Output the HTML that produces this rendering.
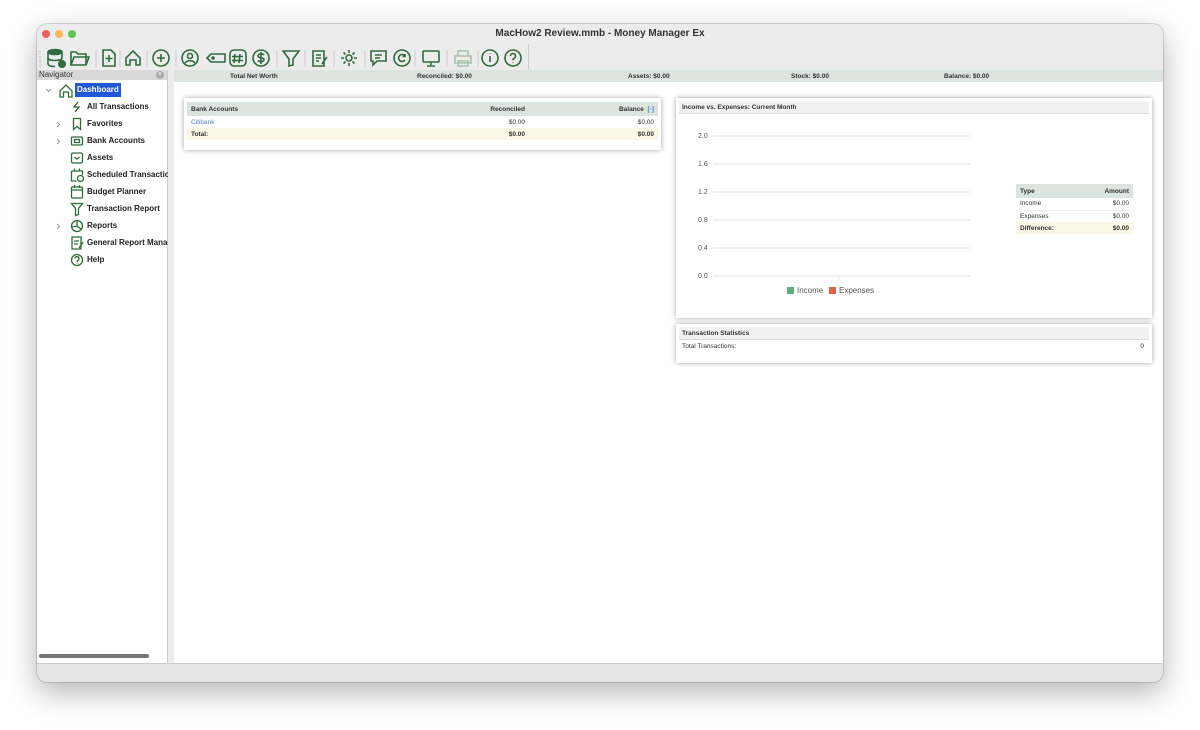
<!DOCTYPE html>
<html><head><style>
*{margin:0;padding:0;box-sizing:border-box}
body{width:1200px;height:730px;background:#fff;font-family:"Liberation Sans",sans-serif;position:relative;overflow:hidden}
.win{position:absolute;left:37px;top:24px;width:1126px;height:658px;background:#ececec;border-radius:10px;box-shadow:0 10px 30px rgba(0,0,0,.3),0 0 0 1px rgba(0,0,0,.15);overflow:hidden}
.title{position:absolute;left:0;top:0;width:100%;height:20px;text-align:center;font-size:10px;font-weight:bold;color:#333;line-height:20px}
.dot{position:absolute;top:6px;width:8px;height:8px;border-radius:50%}
.tb{position:absolute;left:0;top:20px;height:27px;width:492px;border-right:1px solid #ccc}
.tb svg{position:absolute;top:3px}
.nav{position:absolute;left:0;top:46px;width:131px;height:593px;background:#fff;border-right:1px solid #ccc}
.navh{height:10px;background:#d8d8d8;font-size:8px;color:#333;padding-left:2px;line-height:10px;position:relative}
.item{position:absolute;font-size:8px;font-weight:bold;color:#222;line-height:10px}
.content{position:absolute;left:137px;top:46px;width:989px;height:593px;background:#fff}
.sumbar{height:12px;background:#dbe4df;font-size:6.5px;font-weight:bold;color:#333;position:relative}
.sumbar span{position:absolute;top:3px}
.card{position:absolute;background:#fff;box-shadow:0 0 5px rgba(0,0,0,.35)}
table{border-collapse:collapse;font-size:6.5px;color:#333;width:100%}
td{padding:0 4px;height:11px}
.hd td{background:#dbe4df;font-weight:bold}
.tot td{background:#fbf7e6;font-weight:bold}
.r{text-align:right}
.status{position:absolute;left:0;top:639px;width:100%;height:19px;background:#e6e6e6;border-top:1px solid #ccc}
</style></head><body>
<div class="win">
<div class="dot" style="left:5px;background:#ee5f57"></div>
<div class="dot" style="left:18px;background:#f4bd4f"></div>
<div class="dot" style="left:31px;background:#5fc454"></div>
<div class="title">MacHow2 Review.mmb - Money Manager Ex</div>
<div class="tb">
<svg width="492" height="22" fill="none" stroke="#2f6b3c" stroke-width="1.6">
<g transform="translate(10,2)"><ellipse cx="8" cy="3" rx="7" ry="2.5" fill="#2f6b3c"/><path d="M1 3v12c0 1.5 3 2.5 7 2.5M15 3v7M1 9c0 1.5 3 2.5 7 2.5s7-1 7-2.5"/><circle cx="15" cy="15" r="3.2" fill="#2f6b3c"/></g>
<path d="M34 5h5l2 2h8v11H34z M34 18l3-8h15l-3 8"/>
<path d="M66 3h8l4 4v12H66z M72 8v7M68.5 11.5h7"/>
<path d="M89 11l7-7 7 7v7h-4v-5h-6v5h-4z"/>
<circle cx="124" cy="11" r="8"/><path d="M124 7v8M120 11h8"/>
<circle cx="153" cy="11" r="8"/><circle cx="153" cy="9" r="2.5"/><path d="M148 16c2-3 8-3 10 0"/>
<path d="M170 11l4-4h14v8h-14z"/><circle cx="176" cy="11" r="1"/>
<rect x="193" y="3" width="16" height="16" rx="4"/><path d="M198 7l-1 9M203 7l-1 9M195 9.5h11M195 13.5h11"/>
<circle cx="224" cy="11" r="8"/><path d="M227 8c-1-1.5-6-1.5-6 1s6 1 6 3.5-5 2.5-6 1M224 5v12"/>
<path d="M246 4h16l-6 8v6l-4 1v-7z"/>
<path d="M276 4h11v15h-11zM279 8h5M279 11h5M279 14h3M290 10l-5 7"/>
<circle cx="312" cy="11" r="3"/><path d="M312 3v3M312 16v3M304 11h3M317 11h3M306.5 5.5l2 2M315.5 14.5l2 2M306.5 16.5l2-2M315.5 7.5l2-2"/>
<path d="M334 4h15v10h-9l-4 4v-4h-2zM338 8h7M338 11h5"/>
<circle cx="365" cy="11" r="8"/><path d="M368 9a3.5 3.5 0 1 0 0 4M368 7v2.5h-2.5"/>
<rect x="386" y="4" width="16" height="11" rx="1"/><path d="M394 15v3M390 19h8"/>
<g stroke="#a8c2ae"><path d="M418 9h16v7h-16zM421 9V4h10v5M421 14h10v5h-10z"/></g>
<circle cx="453" cy="11" r="8"/><path d="M453 9v6M453 6.5v.5"/>
<circle cx="476" cy="11" r="8"/><path d="M473.5 9a2.5 2.5 0 1 1 3.5 2.3c-1 .5-1 1-1 2M476 15.5v.5"/>
<path d="M3 4v16" stroke="#999" stroke-dasharray="1 1.5" stroke-width="1"/>
<g stroke="#ccc" stroke-width="1"><path d="M59 3v17M83 3v17M110 3v17M139 3v17M240 3v17M268 3v17M297 3v17M328 3v17M378 3v17M410 3v17M441 3v17"/></g>
</svg>
</div>
<div class="nav">
<div class="navh">Navigator<span style="position:absolute;right:3px;top:1px;width:8px;height:8px;border-radius:50%;background:#aaa;color:#fff;font-size:7px;line-height:8px;text-align:center">×</span></div>
<svg style="position:absolute;left:0;top:0" width="131" height="200" fill="none" stroke="#2f6b3c" stroke-width="1.3">
<g stroke="#999" stroke-width="1"><path d="M9 19l2.5 2.5 2.5-2.5M20 52l2.5 2.5-2.5 2.5M20 69l2.5 2.5-2.5 2.5M20 154l2.5 2.5-2.5 2.5"/></g>
<g transform="translate(29,20)"><path d="M-6 1l6-6 6 6v6h-3.5v-5h-5v5h-3.5z"/></g>
<g transform="translate(40,37)"><path d="M1 -5l-4 5h5l-4 5"/></g>
<g transform="translate(40,54)"><path d="M-3.5 -5.5h7v11l-3.5-3-3.5 3z"/></g>
<g transform="translate(40,71)"><rect x="-5.5" y="-4" width="11" height="8" rx="1"/><rect x="-2.5" y="-1.5" width="5" height="3"/></g>
<g transform="translate(40,88)"><rect x="-5.5" y="-5" width="11" height="10" rx="1.5"/><path d="M-2.5 -1l2.5 2 2.5-2"/></g>
<g transform="translate(40,105)"><path d="M-5.5 -4h11v4M-5.5 -4v10h5M-2.5 -6.5v3M2.5 -6.5v3"/><circle cx="3.5" cy="3.5" r="3"/></g>
<g transform="translate(40,122)"><rect x="-5.5" y="-5" width="11" height="11" rx="1"/><path d="M-5.5 -2h11M-2.5 -7v3M2.5 -7v3"/></g>
<g transform="translate(40,139)"><path d="M-5.5 -5.5h11l-4 5v6l-3 1v-7z"/></g>
<g transform="translate(40,156)"><circle r="5.5"/><path d="M0 -5.5v5.5l4 3M0 0l-5 1"/></g>
<g transform="translate(40,173)"><path d="M-5 -6h9v12h-9zM-3 -2h5M-3 1h4M6 -1l-4 6"/></g>
<g transform="translate(40,190)"><circle r="5.5"/><path d="M-2 -1.5a2 2 0 1 1 2.5 2v1.5M0.5 3.5v.5"/></g>
</svg>
<div class="item" style="left:38px;top:13px;height:14px;line-height:14px;background:#2057d6;color:#fff;padding:0 2px">Dashboard</div>
<div class="item" style="left:50px;top:32px">All Transactions</div>
<div class="item" style="left:50px;top:49px">Favorites</div>
<div class="item" style="left:50px;top:66px">Bank Accounts</div>
<div class="item" style="left:50px;top:83px">Assets</div>
<div class="item" style="left:50px;top:100px;white-space:nowrap;width:81px;overflow:hidden">Scheduled Transactions</div>
<div class="item" style="left:50px;top:117px">Budget Planner</div>
<div class="item" style="left:50px;top:134px">Transaction Report</div>
<div class="item" style="left:50px;top:151px">Reports</div>
<div class="item" style="left:50px;top:168px;white-space:nowrap;width:81px;overflow:hidden">General Report Manager</div>
<div class="item" style="left:50px;top:185px">Help</div>
<div style="position:absolute;left:2px;top:584px;width:110px;height:4px;border-radius:2px;background:#777"></div>
</div>
<div class="content">
<div class="sumbar"><span style="left:56px">Total Net Worth</span><span style="left:243px">Reconciled: $0.00</span><span style="left:454px">Assets: $0.00</span><span style="left:617px">Stock: $0.00</span><span style="left:770px">Balance: $0.00</span></div>
<div class="card" style="left:10px;top:28px;width:477px;height:52px;padding:4px 3px">
<table><tr class="hd"><td style="height:14px">Bank Accounts</td><td class="r" style="width:130px">Reconciled</td><td class="r" style="width:129px">Balance &nbsp;<span style="color:#4a80c8">[-]</span></td></tr>
<tr><td style="color:#4a80c8;height:12px">Citibank</td><td class="r">$0.00</td><td class="r">$0.00</td></tr>
<tr class="tot"><td style="height:12px">Total:</td><td class="r">$0.00</td><td class="r">$0.00</td></tr></table></div>
<div class="card" style="left:502px;top:28px;width:476px;height:220px">
<div style="margin:3px 3px 0;height:13px;background:#f1f1f1;border-bottom:1px solid #ddd;font-size:6.5px;font-weight:bold;color:#333;padding:3px 3px">Income vs. Expenses: Current Month</div>
<svg style="position:absolute;left:0;top:0" width="476" height="220" font-family="Liberation Sans" font-size="7" fill="#555">
<g stroke="#e3e3e3"><path d="M37 38h257M37 66h257M37 94h257M37 122h257M37 150h257M37 178h257M163 178v4"/></g>
<text x="22" y="40">2.0</text><text x="22" y="68">1.6</text><text x="22" y="96">1.2</text><text x="22" y="124">0.8</text><text x="22" y="152">0.4</text><text x="22" y="180">0.0</text>
<rect x="111" y="189" width="7" height="7" fill="#5fae7c"/><text x="121" y="195" font-size="8">Income</text>
<rect x="153" y="189" width="7" height="7" fill="#e4604f"/><text x="163" y="195" font-size="8">Expenses</text>
</svg>
<div style="position:absolute;left:340px;top:86px;width:117px">
<table><tr class="hd"><td style="height:14px">Type</td><td class="r">Amount</td></tr>
<tr><td style="height:12px;border-bottom:1px solid #eee">Income</td><td class="r" style="border-bottom:1px solid #eee">$0.00</td></tr>
<tr><td style="height:12px">Expenses</td><td class="r">$0.00</td></tr>
<tr class="tot"><td style="height:12px">Difference:</td><td class="r">$0.00</td></tr></table></div>
</div>
<div class="card" style="left:502px;top:254px;width:476px;height:39px">
<div style="margin:3px 3px 0;height:13px;background:#f1f1f1;border-bottom:1px solid #ddd;font-size:6.5px;font-weight:bold;color:#333;padding:3px 3px">Transaction Statistics</div>
<div style="font-size:6.5px;color:#333;padding:3px 6px;position:relative">Total Transactions:<span style="position:absolute;right:8px">0</span></div>
</div>
</div>
<div class="status"></div>
</div>
</body></html>
